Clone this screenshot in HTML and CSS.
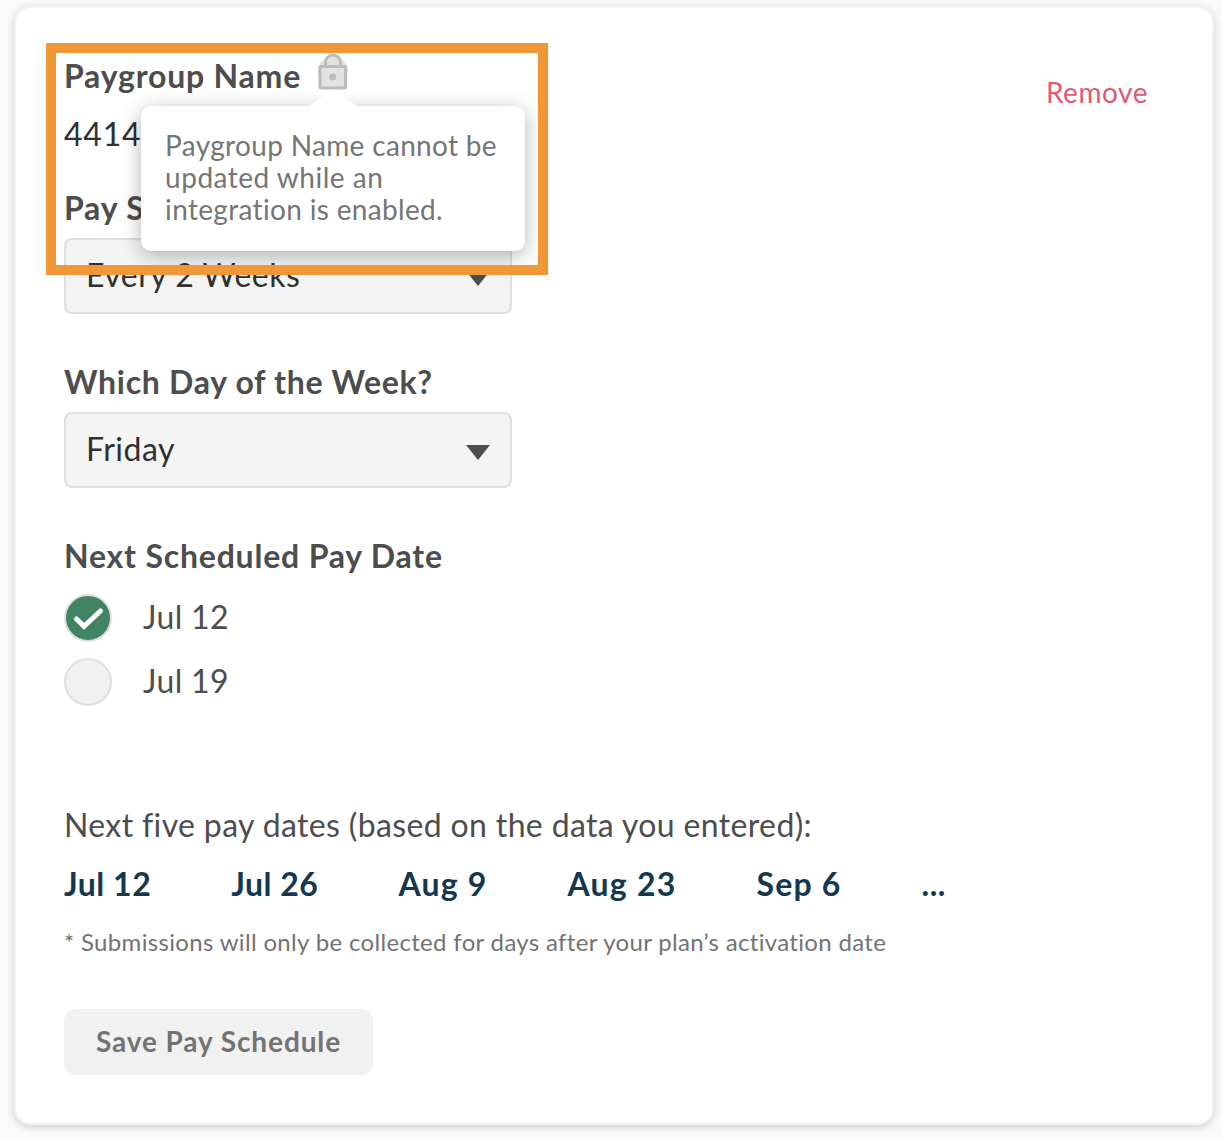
FILE: index.html
```html
<!DOCTYPE html>
<html lang="en">
<head>
    <meta charset="UTF-8">
    <title>Pay Schedule</title>
    <link rel="stylesheet" href="styles.css">
</head>
<body>
    <form class="card">
        <div class="fields">
            <div class="name-field">
                <div class="label-row">
                    <span class="label">Paygroup Name</span>
                    <div class="lock">
                        <svg width="30" height="37" viewBox="0 0 30 37">
                            <circle cx="15" cy="18" r="15" fill="#e2e2e2"/>
                            <path d="M7.500 13.500V9.500a7.500 7.500 0 0 1 15 0V13.500" fill="none" stroke="#bcbcbc" stroke-width="3"/>
                            <rect x="2" y="13.500" width="25.500" height="21.500" rx="1" fill="#e2e2e2" stroke="#bcbcbc" stroke-width="3"/>
                            <circle cx="14.700" cy="24" r="3.500" fill="#bcbcbc"/>
                        </svg>
                        <div class="tooltip">
                            <span>Paygroup Name cannot be</span><br>
                            <span class="tip-second">updated while an</span><br>
                            <span>integration is enabled.</span>
                        </div>
                    </div>
                </div>
                <p class="value">4414</p>
                <div class="highlight"></div>
            </div>

            <label class="label label-schedule">Pay Schedule</label>
            <div class="select"><span>Every 2 Weeks</span><i class="arrow"></i></div>

            <label class="label label-day">Which Day of the Week?</label>
            <div class="select"><span>Friday</span><i class="arrow"></i></div>

            <label class="label label-next">Next Scheduled Pay Date</label>
            <div class="radio">
                <span class="dot checked">
                    <svg width="44" height="44" viewBox="0 0 44 44">
                        <path d="M10.500 23L18 30.300L34.500 15" fill="none" stroke="#fff" stroke-width="5" stroke-linecap="round"/>
                    </svg>
                </span>
                <span class="radio-text">Jul 12</span>
            </div>
            <div class="radio">
                <span class="dot"></span>
                <span class="radio-text">Jul 19</span>
            </div>

            <p class="preview">Next five pay dates (based on the data you entered):</p>
            <div class="dates">
                <span class="july">Jul 12</span>
                <span class="july">Jul 26</span>
                <span>Aug 9</span>
                <span>Aug 23</span>
                <span>Sep 6</span>
                <span class="more">...</span>
            </div>
            <p class="note">* Submissions will only be collected for days after your plan’s activation date</p>
            <button type="button" class="save">Save Pay Schedule</button>
        </div>
        <a class="remove">Remove</a>
    </form>
</body>
</html>
```
FILE: styles.css
```css
* {
    margin: 0;
    padding: 0;
    box-sizing: border-box;
}

body {
    padding: 6px 8px 0 14px;
    height: 1138px;
    background-color: #fafafa;
    font-family: Lato, "Noto Sans", sans-serif;
    font-size: 32px;
    line-height: 42px;
    letter-spacing: 0.36px;
    color: #4d4d4d;
}

.card {
    display: flex;
    justify-content: space-between;
    align-items: flex-start;
    height: 1119px;
    padding: 47px 64px 0 48px;
    border: 2px solid #f2f2f2;
    border-radius: 16px;
    background-color: #fff;
    box-shadow: 0 2px 8px rgba(0, 0, 0, 0.18);
}

.fields {
    display: flex;
    flex-direction: column;
    align-items: flex-start;
}

.label {
    font-weight: bold;
    letter-spacing: 0.8px;
}

.name-field {
    position: relative;
}

.label-row {
    display: flex;
    gap: 17px;
}

.lock {
    position: relative;
    height: 37px;
    margin-top: -2px;
    line-height: 0;
}

.tooltip {
    position: absolute;
    z-index: 2;
    top: 53px;
    left: -177px;
    width: 384px;
    height: 145px;
    padding: 23px 24px;
    border-radius: 10px;
    background-color: #fff;
    box-shadow: 0 4px 20px rgba(0, 0, 0, 0.3);
    color: #757575;
    font-size: 28px;
    line-height: 32px;
    letter-spacing: 0.33px;
    white-space: nowrap;
}

.tip-second {
    letter-spacing: 0.5px;
}

/* 提示框的小三角 */
.tooltip::before {
    content: "";
    position: absolute;
    top: -17px;
    left: 167px;
    width: 50px;
    height: 18px;
    background-color: #fff;
    clip-path: polygon(50% 0, 100% 100%, 0 100%);
}

.value {
    margin-top: 16px;
    letter-spacing: 0.8px;
    color: #303030;
}

.highlight {
    position: absolute;
    z-index: 3;
    top: -12px;
    left: -18px;
    width: 502px;
    height: 232px;
    border: 10px solid #f09837;
}

.label-schedule {
    margin-top: 32px;
}

.label-day,
.label-next {
    margin-top: 47px;
}

.label-day {
    letter-spacing: 0.7px;
}

.select {
    display: flex;
    justify-content: space-between;
    align-items: center;
    width: 448px;
    height: 76px;
    margin-top: 9px;
    padding: 0 20px;
    border: 2px solid #dfdfdf;
    border-radius: 8px;
    background-color: #f4f4f4;
    letter-spacing: 0.5px;
    color: #303030;
}

.select > span,
.radio-text {
    padding-bottom: 2px;
}

.arrow {
    margin-top: 4px;
    border-left: 12px solid transparent;
    border-right: 12px solid transparent;
    border-top: 15px solid #4d4d4d;
}

.radio {
    display: flex;
    align-items: center;
    gap: 31px;
    height: 48px;
    margin-top: 16px;
}

.label-next + .radio {
    margin-top: 17px;
}

.dot {
    width: 48px;
    height: 48px;
    border: 2px solid #dfdfdf;
    border-radius: 50%;
    background-color: #f1f1f1;
}

.checked {
    background-color: #408463;
    line-height: 0;
}

.preview {
    margin-top: 98px;
}

.dates {
    display: flex;
    gap: 80px;
    margin-top: 17px;
    font-weight: bold;
    letter-spacing: 1.2px;
    color: #153851;
}

.dates .july,
.dates .more {
    letter-spacing: 0.5px;
}

.note {
    margin-top: 21px;
    font-size: 24px;
    line-height: 32px;
    letter-spacing: 0.33px;
    color: #737373;
}

.save {
    width: 309px;
    height: 66px;
    margin-top: 51px;
    padding-bottom: 2px;
    border: none;
    border-radius: 12px;
    background-color: #f1f1f1;
    color: #737373;
    font: bold 28px Lato, "Noto Sans", sans-serif;
    letter-spacing: 0.9px;
}

.remove {
    margin-top: 16px;
    font-size: 28px;
    letter-spacing: 0.55px;
    color: #e05a70;
}
```
